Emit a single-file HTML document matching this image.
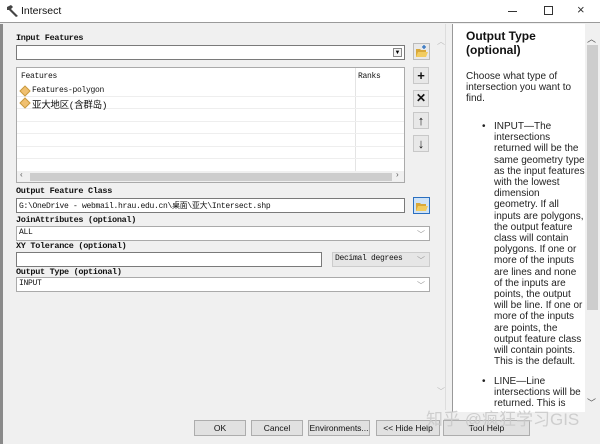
<!DOCTYPE html>
<html><head><meta charset="utf-8"><style>
*{margin:0;padding:0;box-sizing:border-box}
body{width:600px;height:444px;overflow:hidden;background:#f0f0f0;position:relative;font-family:"Liberation Sans",Arial,sans-serif}
.a{position:absolute}
.lab{position:absolute;font-family:"Liberation Mono","Noto Sans CJK SC",monospace;font-size:8.5px;color:#111;font-weight:bold;letter-spacing:-0.3px}
.box{position:absolute;background:#fff;border:1px solid #7a7a7a}
.txt{position:absolute;font-family:"Liberation Mono","Noto Sans CJK SC",monospace;font-size:8px;color:#111;left:2px;top:1px;white-space:nowrap;letter-spacing:-0.3px}
.chev{position:absolute;right:4px;top:2px;font-size:8px;color:#999}
.btn{position:absolute;background:#e1e1e1;border:1px solid #adadad;font-size:8.5px;color:#111;text-align:center;line-height:15px;top:420px;height:16px}
.sb{position:absolute;left:413px;width:16px;height:17px;background:#e8e8e8;border:1px solid #c8c8c8;font-weight:bold;font-size:13px;text-align:center;line-height:15px;color:#111}
.help{font-size:10px;line-height:11.2px;color:#222;white-space:nowrap}
</style></head><body>
<div class="a" style="left:0;top:0;width:600px;height:23px;background:#fff;border-bottom:1px solid #9a9a9a"></div>
<svg class="a" style="left:5px;top:4px" width="14" height="14"><path d="M2 3 L6 1 L8 3 L6 5 L13 12 L11 13 L4 6 L2 6 Z" fill="#444"/></svg>
<div class="a" style="left:21px;top:5px;font-size:10.5px;color:#111">Intersect</div>
<div class="a" style="left:508px;top:11px;width:9px;height:1px;background:#333"></div>
<div class="a" style="left:544px;top:6px;width:9px;height:9px;border:1px solid #333"></div>
<div class="a" style="left:577px;top:2px;font-size:13px;color:#333">×</div>
<div class="a" style="left:0;top:24px;width:3px;height:420px;background:#8a8a8a"></div>
<div class="a" style="left:437px;top:36px;font-size:8px;color:#bbb">︿</div>
<div class="a" style="left:437px;top:386px;font-size:8px;color:#bbb">﹀</div>
<div class="a" style="left:445px;top:24px;width:1px;height:386px;background:#ddd"></div>

<div class="lab" style="left:16px;top:33px">Input Features</div>
<div class="box" style="left:16px;top:45px;width:389px;height:15px"><div class="a" style="right:2px;top:2px;width:9px;height:9px;border:1px solid #888;background:#f4f4f4;font-size:6px;text-align:center;line-height:8px">▼</div></div>
<svg class="a" style="left:413px;top:43px" width="17" height="17"><rect x=".5" y=".5" width="16" height="16" fill="#e9e9e9" stroke="#bbb"/><path d="M3 6h4l1 1h5v7H3z" fill="#d9a93a"/><path d="M3 14l2-5h10l-2 5z" fill="#f2cc60"/><path d="M11 2v4M9 4h4" stroke="#2a6fc0" stroke-width="1.3"/></svg>

<div class="box" style="left:16px;top:67px;width:389px;height:116px;border-color:#aaa">
<div class="a" style="left:338px;top:0;width:1px;height:103px;background:#e4e4e4"></div>
<div class="txt" style="left:4px;top:4px">Features</div>
<div class="txt" style="left:341px;top:4px">Ranks</div>
<div class="a" style="left:0;top:28px;width:387px;height:1px;background:#eee"></div>
<div class="a" style="left:0;top:40px;width:387px;height:1px;background:#eee"></div>
<div class="a" style="left:0;top:53px;width:387px;height:1px;background:#eee"></div>
<div class="a" style="left:0;top:65px;width:387px;height:1px;background:#eee"></div>
<div class="a" style="left:0;top:78px;width:387px;height:1px;background:#eee"></div>
<div class="a" style="left:0;top:90px;width:387px;height:1px;background:#eee"></div>
<div class="a" style="left:4px;top:19px;width:8px;height:8px;background:#f0c070;border:1px solid #c89a40;transform:rotate(45deg)"></div>
<div class="txt" style="left:15px;top:18px">Features-polygon</div>
<div class="a" style="left:4px;top:31px;width:8px;height:8px;background:#f0c070;border:1px solid #c89a40;transform:rotate(45deg)"></div>
<div class="txt" style="left:15px;top:29px;font-size:9.5px">亚大地区(含群岛)</div>
<div class="a" style="left:0;top:103px;width:387px;height:11px;background:#f0f0f0"></div>
<div class="a" style="left:13px;top:105px;width:362px;height:8px;background:#cdcdcd"></div>
<div class="a" style="left:3px;top:102px;font-size:8px;color:#555">‹</div>
<div class="a" style="left:379px;top:102px;font-size:8px;color:#555">›</div>
</div>
<div class="sb" style="top:67px">+</div>
<div class="sb" style="top:90px;font-size:12px">✕</div>
<div class="sb" style="top:112px">↑</div>
<div class="sb" style="top:135px">↓</div>

<div class="lab" style="left:16px;top:186px">Output Feature Class</div>
<div class="box" style="left:16px;top:198px;width:389px;height:15px"><div class="txt">G:\OneDrive - webmail.hrau.edu.cn\桌面\亚大\Intersect.shp</div></div>
<svg class="a" style="left:413px;top:197px" width="17" height="17"><rect x=".5" y=".5" width="16" height="16" fill="#cfe3f7" stroke="#2a6fc0"/><path d="M3 6h4l1 1h5v7H3z" fill="#d9a93a"/><path d="M3 14l2-5h10l-2 5z" fill="#f2cc60"/></svg>

<div class="lab" style="left:16px;top:215px">JoinAttributes (optional)</div>
<div class="box" style="left:16px;top:226px;width:414px;height:15px;border-color:#aaa"><div class="txt">ALL</div><div class="chev">﹀</div></div>
<div class="lab" style="left:16px;top:241px">XY Tolerance (optional)</div>
<div class="box" style="left:16px;top:252px;width:306px;height:15px"></div>
<div class="box" style="left:332px;top:252px;width:98px;height:15px;background:#e6e6e6;border-color:#ccc"><div class="txt">Decimal degrees</div><div class="chev">﹀</div></div>
<div class="lab" style="left:16px;top:267px">Output Type (optional)</div>
<div class="box" style="left:16px;top:277px;width:414px;height:15px;border-color:#aaa"><div class="txt">INPUT</div><div class="chev">﹀</div></div>

<div class="a" style="left:452px;top:24px;width:148px;height:388px;background:#fff;border-left:1px solid #999"></div>
<div class="a" style="left:585px;top:24px;width:15px;height:388px;background:#f0f0f0"></div>
<div class="a" style="left:587px;top:45px;width:11px;height:265px;background:#cdcdcd"></div>
<div class="a" style="left:587px;top:32px;font-size:9px;color:#555">︿</div>
<div class="a" style="left:587px;top:396px;font-size:9px;color:#555">﹀</div>
<div class="a" style="left:466px;top:29px;font-size:12px;font-weight:bold;line-height:14px;color:#111">Output Type<br>(optional)</div>
<div class="a help" style="left:466px;top:71px">Choose what type of<br>intersection you want to<br>find.</div>
<div class="a help" style="left:482px;top:121px">•</div>
<div class="a help" style="left:494px;top:121px">INPUT—The<br>intersections<br>returned will be the<br>same geometry type<br>as the input features<br>with the lowest<br>dimension<br>geometry. If all<br>inputs are polygons,<br>the output feature<br>class will contain<br>polygons. If one or<br>more of the inputs<br>are lines and none<br>of the inputs are<br>points, the output<br>will be line. If one or<br>more of the inputs<br>are points, the<br>output feature class<br>will contain points.<br>This is the default.</div>
<div class="a help" style="left:482px;top:376px">•</div>
<div class="a" style="left:494px;top:376px;width:90px;height:36px;overflow:hidden"><div class="help">LINE—Line<br>intersections will be<br>returned. This is</div></div>

<div class="btn" style="left:194px;width:52px">OK</div>
<div class="btn" style="left:251px;width:52px">Cancel</div>
<div class="btn" style="left:308px;width:62px">Environments...</div>
<div class="btn" style="left:376px;width:64px">&lt;&lt; Hide Help</div>
<div class="btn" style="left:443px;width:87px">Tool Help</div>
<div class="a" style="left:426px;top:405px;font-size:17px;color:rgba(200,200,200,.85);font-family:'Liberation Sans','Noto Sans CJK SC',sans-serif;white-space:nowrap">知乎 @疯狂学习GIS</div>
</body></html>
